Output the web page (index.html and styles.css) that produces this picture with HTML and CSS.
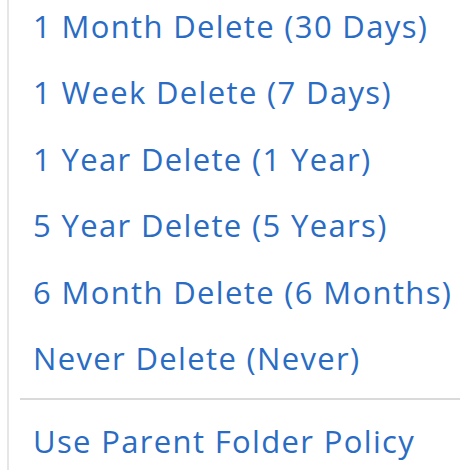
FILE: index.html
```html
<!DOCTYPE html>
<html>
<head>
<meta charset="utf-8">
<link rel="stylesheet" href="styles.css">
</head>
<body>
<div class="menu">
  <ul class="items">
    <li class="item">1 Month Delete (30 Days)</li>
    <li class="item">1 Week Delete (7 Days)</li>
    <li class="item">1 Year Delete (1 Year)</li>
    <li class="item">5 Year Delete (5 Years)</li>
    <li class="item">6 Month Delete (6 Months)</li>
    <li class="item">Never Delete (Never)</li>
  </ul>
  <div class="separator"></div>
  <ul class="items">
    <li class="item">Use Parent Folder Policy</li>
  </ul>
</div>
</body>
</html>
```
FILE: styles.css
```css
html, body {
  margin: 0;
  padding: 0;
  background: #ffffff;
  width: 474px;
  height: 474px;
  overflow: hidden;
}
.menu {
  margin-left: 7px;
  margin-top: -7px;
  height: 477px;
  border-left: 2px solid #e6e6e6;
  font-family: "Open Sans", "Noto Sans", sans-serif;
  font-size: 31px;
  letter-spacing: 1.35px;
  color: #2a6cc4;
}
.items {
  list-style: none;
  margin: 0;
  padding: 0;
}
.item {
  height: 66.4px;
  line-height: 66.4px;
  padding-left: 24px;
  white-space: nowrap;
}
.separator {
  height: 2px;
  background: #dadada;
  margin: 7px 14px 8px 11px;
}
```
